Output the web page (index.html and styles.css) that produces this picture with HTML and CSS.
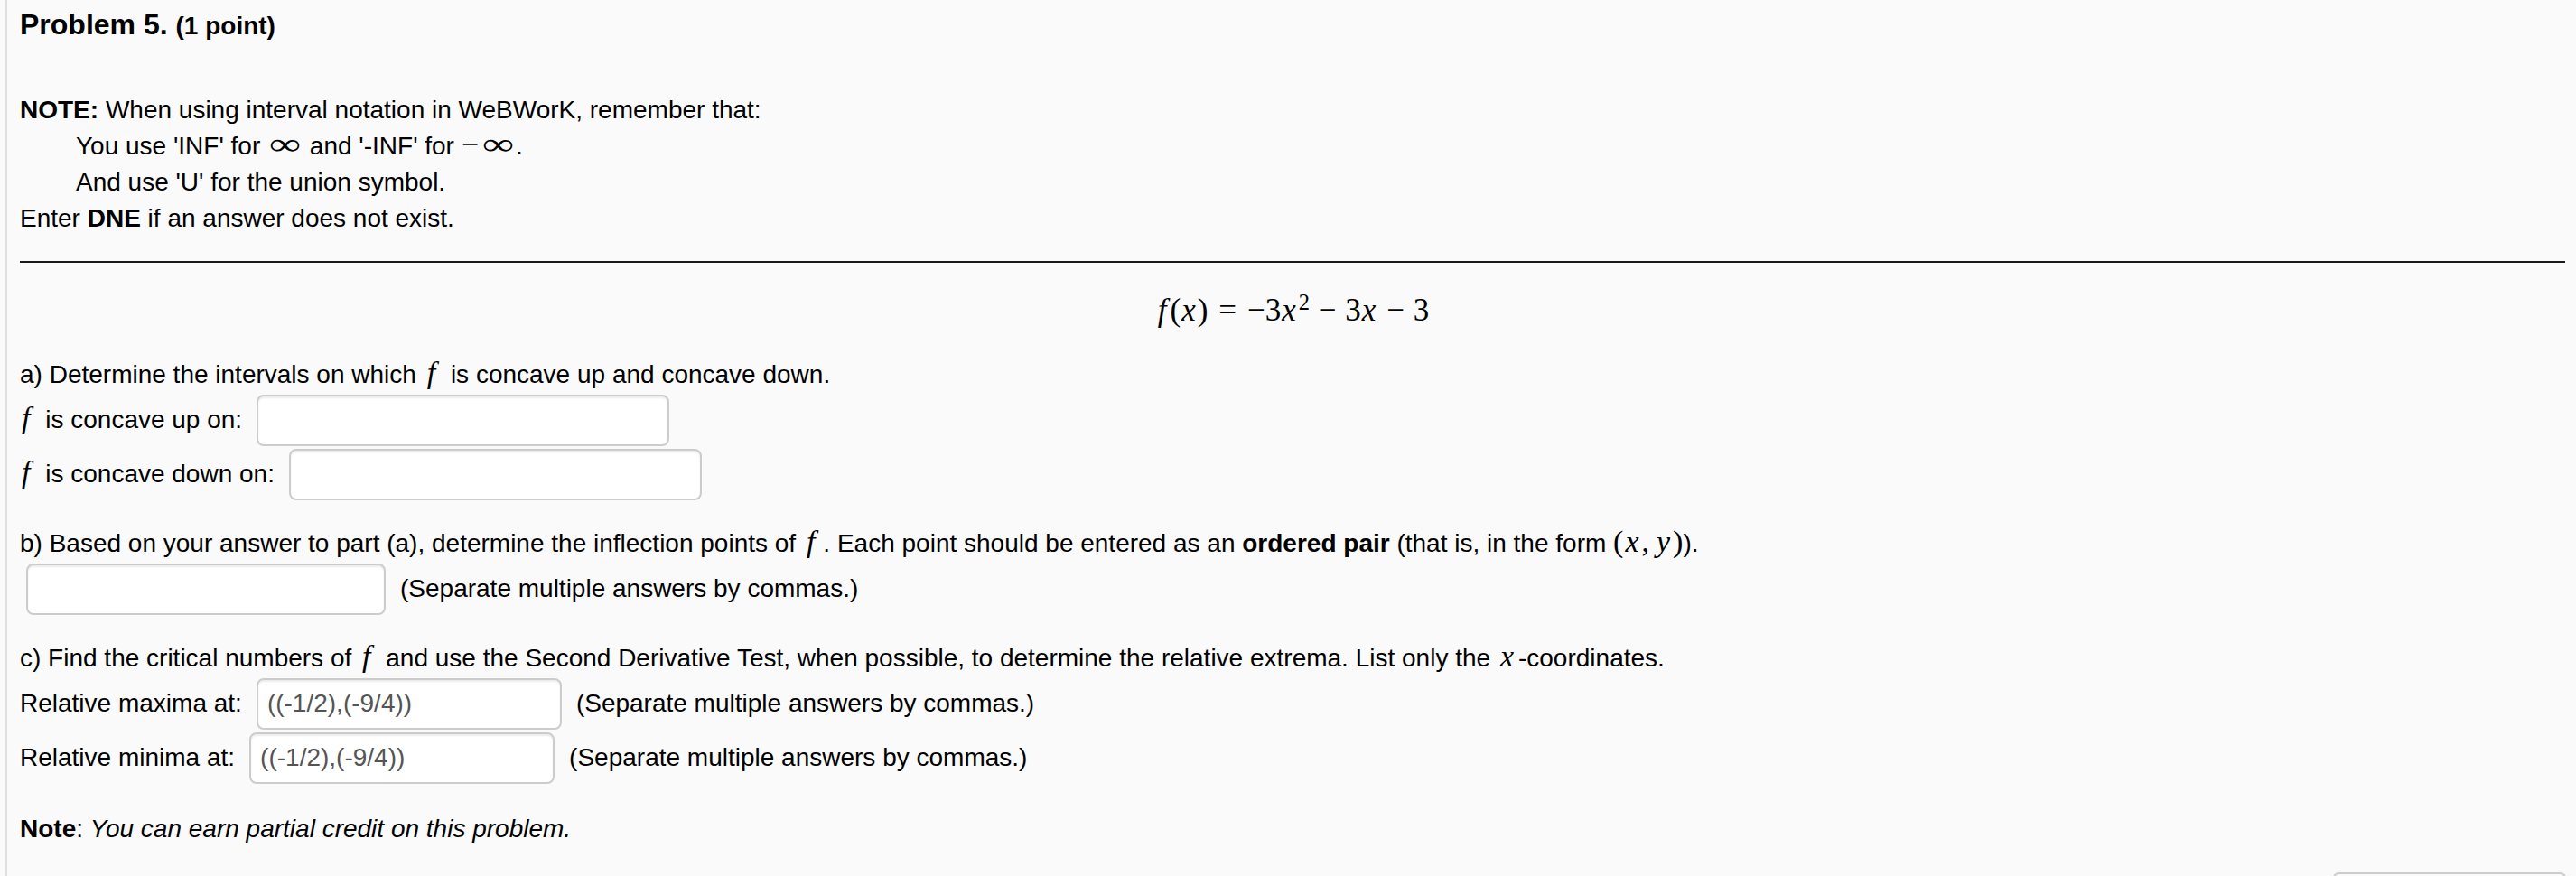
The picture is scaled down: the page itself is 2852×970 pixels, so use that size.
FILE: index.html
```html
<!DOCTYPE html>
<html lang="en">
<head>
<meta charset="utf-8">
<title>Problem 5</title>
<link rel="stylesheet" href="styles.css">
</head>
<body>
<div class="problem">
  <div class="title">Problem 5. <span class="pts">(1 point)</span></div>

  <p class="line"><b>NOTE:</b> When using interval notation in WeBWorK, remember that:</p>
  <p class="line indent">You use 'INF' for <span class="m"><span class="inf">∞</span></span> and '-INF' for <span class="m"><span class="neg">−</span><span class="inf">∞</span></span>.</p>
  <p class="line indent">And use 'U' for the union symbol.</p>
  <p class="line">Enter <b>DNE</b> if an answer does not exist.</p>

  <hr class="rule">

  <div class="display"><span class="mi df">f</span>(<span class="mi dx">x</span>)<span class="rel">=</span>−3<span class="mi dx">x</span><sup class="sup">2</sup><span class="bin">−</span>3<span class="mi dx">x</span><span class="bin">−</span>3</div>

  <p class="line">a) Determine the intervals on which <span class="mi mf">f</span> is concave up and concave down.</p>
  <div class="row"><span><span class="mi mf lead">f</span> is concave up on:</span><input class="answer w-lg" type="text"></div>
  <div class="row"><span><span class="mi mf lead">f</span> is concave down on:</span><input class="answer w-lg" type="text"></div>

  <p class="line sec">b) Based on your answer to part (a), determine the inflection points of <span class="mi mf">f</span>. Each point should be entered as an <b>ordered pair</b> (that is, in the form <span class="m">(<span class="mi mx">x</span>,<span class="comma"></span><span class="mi mx">y</span>)</span>).</p>
  <div class="row"><input class="answer w-md first" type="text"><span>(Separate multiple answers by commas.)</span></div>

  <p class="line sec">c) Find the critical numbers of <span class="mi mf">f</span> and use the Second Derivative Test, when possible, to determine the relative extrema. List only the <span class="mi mx wide">x</span>-coordinates.</p>
  <div class="row"><span>Relative maxima at:</span><input class="answer w-sm" type="text" value="((-1/2),(-9/4))"><span>(Separate multiple answers by commas.)</span></div>
  <div class="row"><span>Relative minima at:</span><input class="answer w-sm" type="text" value="((-1/2),(-9/4))"><span>(Separate multiple answers by commas.)</span></div>

  <p class="line note"><b>Note</b>: <i>You can earn partial credit on this problem.</i></p>

  <div class="footer"><div class="partial-box"></div></div>
</div>
</body>
</html>
```
FILE: styles.css
```css
html, body {
  margin: 0;
  padding: 0;
  background: #fafafa;
  overflow: hidden;
}

.problem {
  margin-left: 6px;
  border-left: 2px solid #e0e0e0;
  padding: 7px 12px 0 14px;
  min-height: 1100px;
  font-family: "Liberation Sans", Arial, Helvetica, sans-serif;
  font-size: 28px;
  line-height: 40px;
  color: #000;
}

.title {
  font-weight: bold;
  font-size: 32px;
  line-height: 40px;
  margin: 0 0 53px;
}

.title .pts {
  font-size: 28px;
}

.line {
  margin: 0;
  white-space: nowrap;
}

.indent {
  padding-left: 62px;
}

.m {
  font-family: "Liberation Serif", "Times New Roman", serif;
  font-size: 34px;
  line-height: 1;
}

.mi {
  font-family: "Liberation Serif", "Times New Roman", serif;
  font-style: italic;
  font-size: 34px;
  line-height: 1;
}

.m .mi {
  font-size: 1em;
}

.mf {
  padding: 0 9px 0 4px;
}

.mf.lead {
  padding-left: 2px;
}

.mx {
  padding: 0 3px 0 2px;
}

.mx.wide {
  padding: 0 5px 0 3px;
}

.comma {
  display: inline-block;
  width: 6px;
}

.neg {
  display: inline-block;
  margin-right: 2px;
}

.inf {
  display: inline-block;
  width: 1.15em;
  text-align: center;
  transform: scaleX(1.45);
}

.rule {
  border: 0;
  border-top: 2px solid #1a1a1a;
  height: 0;
  margin: 27px 0 25px;
}

.display {
  text-align: center;
  font-family: "Liberation Serif", "Times New Roman", serif;
  font-size: 35px;
  line-height: 56px;
  margin-bottom: 23px;
}

.display .mi {
  font-size: 1em;
}

.display .df {
  padding: 0 4px 0 2px;
}

.display .dx {
  padding: 0 2px 0 1px;
}

.sup {
  font-size: 0.7em;
  line-height: 0;
  vertical-align: 0.5em;
  margin-left: 1px;
}

.rel {
  margin: 0 0.34em;
}

.bin {
  margin: 0 0.28em;
}

.row {
  display: flex;
  align-items: center;
  gap: 16px;
  height: 60px;
  white-space: nowrap;
}

.answer {
  box-sizing: border-box;
  height: 57px;
  margin: 0;
  padding: 0 10px;
  border: 2px solid #cccccc;
  border-radius: 8px;
  background: #fff;
  box-shadow: inset 0 2px 2px rgba(0, 0, 0, 0.075);
  font-family: "Liberation Sans", Arial, Helvetica, sans-serif;
  font-size: 28px;
  color: #555;
  outline: none;
}

.w-lg { width: 457px; }
.w-md { width: 398px; }
.w-sm { width: 338px; }

.first {
  margin-left: 7px;
}

.sec {
  margin-top: 27px;
}

.note {
  margin-top: 29px;
}

.footer {
  display: flex;
  justify-content: flex-end;
  margin-top: 28px;
  margin-right: -2px;
}

.partial-box {
  width: 260px;
  height: 56px;
  box-sizing: border-box;
  border: 2px solid #cccccc;
  border-radius: 8px;
  background: #fafafa;
}
```
